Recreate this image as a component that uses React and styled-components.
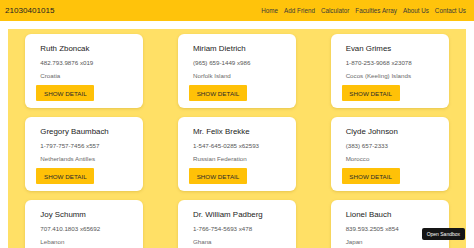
import React from "react";
import styled, { createGlobalStyle } from "styled-components";

const GlobalStyle = createGlobalStyle`
  body {
    margin: 0;
    font-family: "Liberation Sans", Arial, sans-serif;
    background: #fff;
  }
`;

const Navbar = styled.nav`
  align-items: center;
  background: #ffc30b;
  display: flex;
  height: 21px;
  justify-content: space-between;
  padding: 0 8px 0 5px;
`;

const Brand = styled.span`
  color: #222;
  font-size: 8.1px;
`;

const NavLinks = styled.ul`
  display: flex;
  gap: 6px;
  list-style: none;
  margin: 0;
  padding: 0;
`;

const NavLink = styled.li`
  color: #3a3a3a;
  font-size: 6.3px;
`;

const Container = styled.main`
  background: #ffe066;
  display: grid;
  grid-template-columns: repeat(3, 1fr);
  justify-items: center;
  margin: 8px 8px 0;
  padding: 5px 0 12px;
  row-gap: 9px;
`;

const Card = styled.div`
  background: #fff;
  border-radius: 6px;
  box-shadow: 0 1px 3px rgba(160, 120, 0, 0.25);
  box-sizing: border-box;
  display: flex;
  flex-direction: column;
  height: 74px;
  padding: 9px 10px 7px 15px;
  width: 118px;
`;

const Name = styled.h3`
  color: #222;
  font-size: 7.9px;
  font-weight: normal;
  line-height: 12px;
  margin: 0;
  white-space: nowrap;
`;

const Info = styled.p`
  color: ${props => props.muted ? "#6a6a6a" : "#555"};
  font-size: 6.2px;
  line-height: 9px;
  margin: ${props => props.muted ? "4px" : "3px"} 0 0;
  white-space: nowrap;
`;

const DetailButton = styled.button`
  align-self: flex-start;
  background: #ffc107;
  border: none;
  border-radius: 1px;
  color: #2b2b2b;
  font-family: inherit;
  font-size: 6.25px;
  height: 16px;
  margin: 5px 0 0 -4px;
  padding: 0;
  width: 58px;
`;

const SandboxButton = styled.div`
  background: #151515;
  border-radius: 2px;
  bottom: 8px;
  color: #fff;
  font-size: 5px;
  line-height: 12px;
  padding: 0 5px;
  position: fixed;
  right: 9px;
`;

const friends = [
  { name: "Ruth Zboncak", phone: "482.793.9876 x019", country: "Croatia" },
  { name: "Miriam Dietrich", phone: "(965) 659-1449 x986", country: "Norfolk Island" },
  { name: "Evan Grimes", phone: "1-870-253-9068 x23078", country: "Cocos (Keeling) Islands" },
  { name: "Gregory Baumbach", phone: "1-797-757-7456 x557", country: "Netherlands Antilles" },
  { name: "Mr. Felix Brekke", phone: "1-547-645-0285 x62593", country: "Russian Federation" },
  { name: "Clyde Johnson", phone: "(383) 657-2333", country: "Morocco" },
  { name: "Joy Schumm", phone: "707.410.1803 x65692", country: "Lebanon" },
  { name: "Dr. William Padberg", phone: "1-766-754-5693 x478", country: "Ghana" },
  { name: "Lionel Bauch", phone: "839.593.2505 x854", country: "Japan" },
];

const links = ["Home", "Add Friend", "Calculator", "Faculties Array", "About Us", "Contact Us"];

export default function App() {
  return (
    <>
      <GlobalStyle />
      <Navbar>
        <Brand>21030401015</Brand>
        <NavLinks>
          {links.map(link => <NavLink key={link}>{link}</NavLink>)}
        </NavLinks>
      </Navbar>
      <Container>
        {friends.map(friend => (
          <Card key={friend.name}>
            <Name>{friend.name}</Name>
            <Info>{friend.phone}</Info>
            <Info muted>{friend.country}</Info>
            <DetailButton>SHOW DETAIL</DetailButton>
          </Card>
        ))}
      </Container>
      <SandboxButton>Open Sandbox</SandboxButton>
    </>
  );
}
